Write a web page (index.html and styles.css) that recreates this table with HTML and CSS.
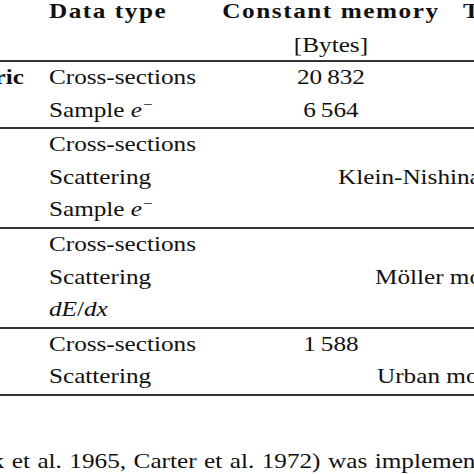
FILE: index.html
```html
<!DOCTYPE html>
<html>
<head>
<meta charset="utf-8">
<link rel="stylesheet" href="styles.css">
</head>
<body>
<div class="page">
  <div class="table">
    <div class="head">
      <div class="row head-a">
        <span class="c2 th">Data type</span>
        <span class="c3 th">Constant memory</span>
        <span class="c4 th">T</span>
      </div>
      <div class="row head-b">
        <span class="c3">[Bytes]</span>
      </div>
    </div>
    <div class="group">
      <div class="row">
        <span class="c1 th-label"><span>ric</span></span>
        <span class="c2">Cross-sections</span>
        <span class="c3">20&#8201;832</span>
      </div>
      <div class="row">
        <span class="c2">Sample <i>e</i><sup class="sup">−</sup></span>
        <span class="c3">6&#8201;564</span>
      </div>
    </div>
    <div class="group">
      <div class="row">
        <span class="c2">Cross-sections</span>
      </div>
      <div class="row">
        <span class="c2">Scattering</span>
        <span class="span span-kn">Klein-Nishina model</span>
      </div>
      <div class="row">
        <span class="c2">Sample <i>e</i><sup class="sup">−</sup></span>
      </div>
    </div>
    <div class="group">
      <div class="row">
        <span class="c2">Cross-sections</span>
      </div>
      <div class="row">
        <span class="c2">Scattering</span>
        <span class="span span-mo">Möller model</span>
      </div>
      <div class="row">
        <span class="c2"><i>dE</i>/<i>dx</i></span>
      </div>
    </div>
    <div class="group last">
      <div class="row">
        <span class="c2">Cross-sections</span>
        <span class="c3">1&#8201;588</span>
      </div>
      <div class="row">
        <span class="c2">Scattering</span>
        <span class="span span-ur">Urban model</span>
      </div>
    </div>
  </div>
  <p class="para">k et al. 1965, Carter et al. 1972) was implemented</p>
</div>
</body>
</html>
```
FILE: styles.css
```css
html, body {
  margin: 0;
  padding: 0;
  overflow: hidden;
  background: #fff;
}

body {
  width: 474px;
  height: 474px;
  font-family: "Liberation Serif", "Times New Roman", serif;
  font-size: 21px;
  color: #111;
}

.page {
  width: 395px;
  transform: scaleX(1.2);
  transform-origin: 0 0;
}

.row {
  display: grid;
  grid-template-columns: 40.8px 135px 200px 19.2px;
  line-height: 30.2px;
  padding-bottom: 2.4px;
  white-space: nowrap;
}

.head-a {
  line-height: 23.4px;
  padding-bottom: 6.4px;
}

.head-b {
  padding-bottom: 0;
}

.th {
  font-weight: bold;
  letter-spacing: 1.3px;
}

.th-label {
  font-weight: bold;
}

.c1 {
  grid-column: 1;
  display: flex;
  justify-content: flex-end;
  padding-right: 20.8px;
}

.c2 {
  grid-column: 2;
}

.c3 {
  grid-column: 3;
  text-align: center;
}

.c4 {
  grid-column: 4;
  padding-left: 10px;
}

.span {
  grid-column: 3 / 5;
}

.span-kn { padding-left: 105.9px; }
.span-mo { padding-left: 136.7px; }
.span-ur { padding-left: 138.4px; }

.sup {
  font-size: 14px;
  line-height: 0;
  vertical-align: 8px;
  margin-left: 1px;
}

.group {
  border-top: 2px solid #333;
}

.group.last {
  border-bottom: 2px solid #333;
}

.para {
  margin: 49.8px 0 0 0;
  line-height: 30.2px;
  white-space: nowrap;
  text-indent: -7px;
  word-spacing: 1px;
}
```
